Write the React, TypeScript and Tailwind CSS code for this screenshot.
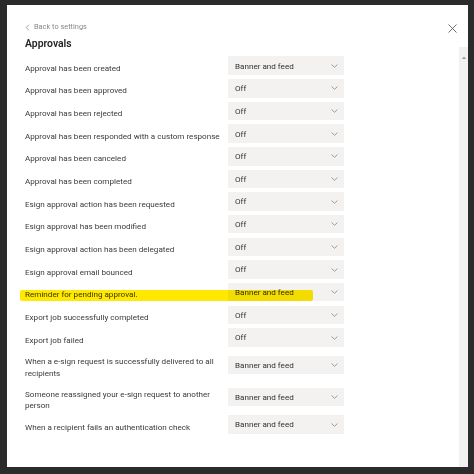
import React from "react";

type Row = { label: string; value: string; two?: boolean; hl?: boolean };

const rows: Row[] = [
  { label: "Approval has been created", value: "Banner and feed" },
  { label: "Approval has been approved", value: "Off" },
  { label: "Approval has been rejected", value: "Off" },
  { label: "Approval has been responded with a custom response", value: "Off" },
  { label: "Approval has been canceled", value: "Off" },
  { label: "Approval has been completed", value: "Off" },
  { label: "Esign approval action has been requested", value: "Off" },
  { label: "Esign approval has been modified", value: "Off" },
  { label: "Esign approval action has been delegated", value: "Off" },
  { label: "Esign approval email bounced", value: "Off" },
  { label: "Reminder for pending approval.", value: "Banner and feed", hl: true },
  { label: "Export job successfully completed", value: "Off" },
  { label: "Export job failed", value: "Off" },
  { label: "When a e-sign request is successfully delivered to all recipients", value: "Banner and feed", two: true },
  { label: "Someone reassigned your e-sign request to another person", value: "Banner and feed", two: true },
  { label: "When a recipient fails an authentication check", value: "Banner and feed" },
];

function Chevron() {
  return (
    <svg width="7" height="4" viewBox="0 0 7 4" fill="none">
      <path d="M0.5 0.5 L3.5 3.3 L6.5 0.5" stroke="#8a8886" strokeWidth="0.8" />
    </svg>
  );
}

function Dropdown({ value }: { value: string }) {
  return (
    <div className="w-[116px] h-[18.5px] shrink-0 bg-[#f3f2f1] flex items-center justify-between pl-[7px] pr-[6px] text-[#323130]">
      <span>{value}</span>
      <Chevron />
    </div>
  );
}

export default function App() {
  return (
    <div
      className="w-[474px] h-[474px] bg-[#2c2b2b] pt-[5px] pl-[7px] pr-[6px] pb-[7px] flex"
      style={{ fontFamily: "Roboto, 'Open Sans', sans-serif" }}
    >
      <div className="relative flex-1 bg-white flex flex-col">
        <div className="flex items-center justify-between pt-[17px] pl-[18px] pr-[11px] h-[27px]">
          <div className="flex items-center gap-[4px] text-[7.4px] text-[#8a8886] leading-[10px]">
            <svg width="5" height="7" viewBox="0 0 5 7" fill="none">
              <path d="M4 0.7 L1.2 3.5 L4 6.3" stroke="#8a8886" strokeWidth="0.8" />
            </svg>
            <span>Back to settings</span>
          </div>
          <svg width="9" height="9" viewBox="0 0 9 9" fill="none" className="mt-[2px]">
            <path d="M0.5 0.5 L8.5 8.5 M8.5 0.5 L0.5 8.5" stroke="#605e5c" strokeWidth="0.9" />
          </svg>
        </div>

        <div className="pl-[18px] mt-[4.5px] text-[10.4px] font-semibold leading-[14px] text-[#252423]">
          Approvals
        </div>

        <div className="pl-[18px] mt-[3.8px] flex flex-col text-[8.1px] text-[#3b3a39]">
          {rows.map((r, i) => (
            <div
              key={i}
              className={
                "relative flex items-center min-h-[22.67px] " + (r.two ? "py-[1.5px]" : "")
              }
            >
              {r.hl && (
                <div className="absolute left-[-5px] top-[9.3px] w-[293px] h-[10.7px] bg-[#ffe900] rounded-[2px] mix-blend-multiply z-10" />
              )}
              <div className="w-[203px] shrink-0 pt-[6px] pr-[2px] leading-[11.6px]">{r.label}</div>
              <Dropdown value={r.value} />
            </div>
          ))}
        </div>

        <div className="absolute right-0 top-[42px] bottom-0 w-[9px] bg-[#f1f1f1] flex justify-center pt-[9px]">
          <svg width="4" height="3" viewBox="0 0 4 3">
            <path d="M0 3 L2 0.6 L4 3 Z" fill="#9a9a9a" />
          </svg>
        </div>
      </div>
    </div>
  );
}
